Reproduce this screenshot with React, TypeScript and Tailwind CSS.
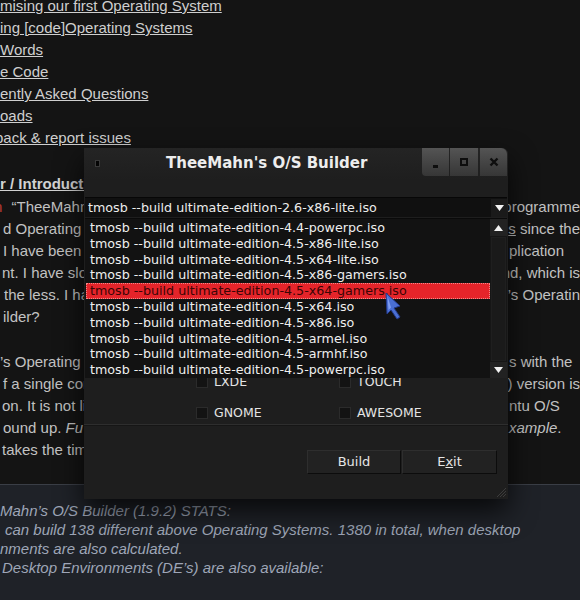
import React from "react";

const links = [
  { t: "mising our first Operating System", pl: "pl-0" },
  { t: "ing [code]Operating Systems", pl: "pl-0" },
  { t: "Words", pl: "pl-0" },
  { t: "e Code", pl: "pl-0" },
  { t: "ently Asked Questions", pl: "pl-0" },
  { t: "oads", pl: "pl-0" },
  { t: "back & report issues", pl: "-ml-[5px]" },
];

const items = [
  "tmosb --build ultimate-edition-4.4-powerpc.iso",
  "tmosb --build ultimate-edition-4.5-x86-lite.iso",
  "tmosb --build ultimate-edition-4.5-x64-lite.iso",
  "tmosb --build ultimate-edition-4.5-x86-gamers.iso",
  "tmosb --build ultimate-edition-4.5-x64-gamers.iso",
  "tmosb --build ultimate-edition-4.5-x64.iso",
  "tmosb --build ultimate-edition-4.5-x86.iso",
  "tmosb --build ultimate-edition-4.5-armel.iso",
  "tmosb --build ultimate-edition-4.5-armhf.iso",
  "tmosb --build ultimate-edition-4.5-powerpc.iso",
];

const des: [string, string][] = [
  ["KDE", "XFCE"],
  ["MATE", "CINNAMON"],
  ["UNITY", "OPENBOX"],
  ["ENLIGHTENMENT", "FLUXBOX"],
  ["LXDE", "TOUCH"],
  ["GNOME", "AWESOME"],
];

function Row({
  left,
  right,
  pl = "pl-0",
}: {
  left: React.ReactNode;
  right?: React.ReactNode;
  pl?: string;
}) {
  return (
    <div className="flex h-[22px] leading-[22px] whitespace-nowrap">
      <div className={`w-[508px] overflow-hidden ${pl}`}>{left}</div>
      <div className="pl-[1px]">{right}</div>
    </div>
  );
}

function Check({ label, offset }: { label: string; offset: string }) {
  return (
    <div className={`flex items-center ${offset}`}>
      <div className="w-[12px] h-[12px] bg-[#131313] border border-[#2b2b2b] shrink-0" />
      <span className="ml-[6px] text-[12.5px] text-[#e4e4e4] leading-[18px]">{label}</span>
    </div>
  );
}

function Tri({ up }: { up?: boolean }) {
  return (
    <svg width="9" height="6" viewBox="0 0 9 6">
      <polygon points={up ? "0,6 9,6 4.5,0" : "0,0 9,0 4.5,6"} fill="#f2f2f2" />
    </svg>
  );
}

export default function App() {
  return (
    <div className="relative w-[580px] h-[600px] overflow-hidden bg-[#141414] font-['Liberation_Sans',Arial,sans-serif] text-[15px] text-[#c2c2c2]">
      {/* page top */}
      <div className="h-[484px] overflow-hidden">
        <div className="-mt-[5px]">
          {links.map((l) => (
            <div key={l.t} className="h-[22px] leading-[22px] whitespace-nowrap">
              <a className={`inline-block underline text-[#cfcfcf] ${l.pl}`}>{l.t}</a>
            </div>
          ))}
          <div className="mt-[24px] h-[22px] leading-[22px] whitespace-nowrap">
            <span className="font-bold underline text-[#d2d2d2]">r / Introduction</span>
          </div>
          <div className="mt-px">
            <Row
              left={
                <>
                  <span className="text-[#b83a32] -ml-[6px]">n</span>
                  <span className="ml-[5px]"> “TheeMahn’s O/S Builder” is a</span>
                </>
              }
              right="programme"
            />
            <Row pl="pl-[3px]" left="d Operating Systems" right={<><span className="underline">s</span> since the</>} />
            <Row pl="pl-[3px]" left="I have been" right="plication" />
            <Row pl="pl-[2px]" left="nt. I have slowly" right="nd, which is" />
            <Row pl="pl-[4px]" left="the less. I have" right="’s Operatin" />
            <Row pl="pl-[3px]" left="ilder?" />
          </div>
          <div className="mt-[23px]">
            <Row left="’s Operating" right="s with the" />
            <Row pl="pl-[3px]" left="f a single command" right=") version is" />
            <Row pl="pl-[2px]" left="on. It is not limited" right="ntu O/S" />
            <Row
              pl="pl-[3px]"
              left={
                <>
                  ound up. <i>Fu</i>
                </>
              }
              right={
                <>
                  <i>xample</i>.
                </>
              }
            />
            <Row pl="pl-[2px]" left="takes the time" />
          </div>
        </div>
      </div>

      {/* page bottom */}
      <div className="h-[116px] border-t border-[#3a3e46] bg-[#1f2228] pt-[16px] italic text-[#9ea6b7] leading-[19px] whitespace-nowrap">
        <div>Mahn’s O/S Builder (1.9.2) STATS:</div>
        <div className="pl-[5px]">can build 138 different above Operating Systems. 1380 in total, when desktop</div>
        <div>nments are also calculated.</div>
        <div className="pl-[2px]">Desktop Environments (DE’s) are also available:</div>
      </div>

      {/* dialog window */}
      <div className="absolute left-[84px] top-[148px] w-[424px] h-[351px] flex flex-col bg-[#1e1e1e] shadow-[0_12px_28px_rgba(0,0,0,0.75)] rounded-tr-[6px] font-['DejaVu_Sans',sans-serif] text-[#ececec]">
        {/* title bar */}
        <div className="h-[32px] flex items-start bg-gradient-to-b from-[#242424] to-[#1e1e1e] rounded-tr-[6px]">
          <div className="ml-[11px] mt-[12px] w-[5px] h-[7px] bg-[#050505] border border-[#3a3a3a]" />
          <div className="ml-[66px] mt-[5px] text-[15px] font-bold leading-[20px] text-[#ededed]">
            TheeMahn's O/S Builder
          </div>
          <div className="ml-auto mr-px flex gap-[1px]">
            <div className="w-[27px] h-[28px] rounded-bl-[4px] bg-gradient-to-b from-[#545454] to-[#363636] flex items-end justify-center pb-[8px]">
              <div className="w-[5px] h-[3px] bg-[#0e0e0e]" />
            </div>
            <div className="w-[28px] h-[28px] bg-gradient-to-b from-[#545454] to-[#363636] flex items-center justify-center">
              <div className="w-[8px] h-[8px] border-2 border-[#0e0e0e]" />
            </div>
            <div className="ml-px w-[27px] h-[28px] rounded-tr-[6px] bg-gradient-to-b from-[#545454] to-[#363636] flex items-center justify-center">
              <svg width="10" height="10" viewBox="0 0 10 10">
                <path d="M1.5 1.5 L8.5 8.5 M8.5 1.5 L1.5 8.5" stroke="#0e0e0e" strokeWidth="2.4" />
              </svg>
            </div>
          </div>
        </div>

        {/* combo */}
        <div className="mt-[17px] mx-px h-[20px] flex items-center bg-[#101010] border-t border-[#070707]">
          <span className="pl-[3px] text-[12.7px] leading-[19px] whitespace-nowrap">
            tmosb --build ultimate-edition-2.6-x86-lite.iso
          </span>
          <div className="ml-auto w-[16px] h-[18px] bg-[#1a1a1a] flex items-center justify-center">
            <Tri />
          </div>
        </div>

        {/* checkboxes */}
        <div className="mt-[32px] grid grid-cols-[255px_1fr] gap-y-[13px]">
          {des.map(([a, b]) => (
            <React.Fragment key={a}>
              <Check label={a} offset="pl-[112px]" />
              <Check label={b} offset="pl-0" />
            </React.Fragment>
          ))}
        </div>

        <div className="mt-[2px] border-t border-[#2e2e2e] border-b border-b-[#161616]" />

        {/* buttons */}
        <div className="mt-[24px] flex justify-end pr-[11px]">
          <button className="w-[94px] h-[24px] bg-[#222222] border border-[#0c0c0c] border-t-[#2e2e2e] border-l-[#2e2e2e] text-[13px] text-[#e6e6e6]">
            Build
          </button>
          <button className="ml-px w-[95px] h-[24px] bg-[#222222] border border-[#0c0c0c] border-t-[#2e2e2e] border-l-[#2e2e2e] text-[13px] text-[#e6e6e6]">
            E<span className="underline">x</span>it
          </button>
        </div>

        <div className="flex-1 flex items-end justify-end">
          <svg width="13" height="13" viewBox="0 0 13 13" className="mb-px mr-px">
            <path d="M12 3 L3 12 M12 6 L6 12 M12 9 L9 12" stroke="#3c3c3c" strokeWidth="1" />
          </svg>
        </div>

        {/* dropdown popup */}
        <div className="absolute left-px top-[70px] w-[422px] h-[160px] flex bg-[#121212] border-t border-[#0a0a0a]">
          <div className="flex-1 pt-[1px] pl-px">
            {items.map((it, i) => (
              <div
                key={it}
                className={`h-[15.8px] leading-[15.8px] pl-[4px] text-[12.7px] whitespace-nowrap ${
                  i === 4
                    ? "bg-[#e5242a] text-[#3a0505] outline-1 outline-dotted outline-[#f28a8a] -outline-offset-1"
                    : "text-[#efefef]"
                }`}
              >
                {it}
              </div>
            ))}
          </div>
          <div className="w-[17px] flex flex-col bg-[#161616]">
            <div className="h-[17px] bg-[#222222] flex items-center justify-center">
              <Tri up />
            </div>
            <div className="flex-1 mx-px my-px bg-[#1a1a1a] border border-[#1f1f1f]" />
            <div className="h-[16px] bg-[#222222] flex items-center justify-center">
              <Tri />
            </div>
          </div>
        </div>
      </div>

      {/* mouse cursor */}
      <svg
        className="absolute left-[383px] top-[291px]"
        width="20"
        height="30"
        viewBox="0 0 20 30"
      >
        <polygon
          points="3,2 4,23 8,19 14,28 17,26 11,17 17,15"
          fill="#4a6fd4"
          stroke="#22398a"
          strokeWidth="1"
          strokeLinejoin="round"
        />
        <polygon points="4.5,5 5.5,19 8,16.5" fill="#7f9cf0" />
      </svg>
    </div>
  );
}
